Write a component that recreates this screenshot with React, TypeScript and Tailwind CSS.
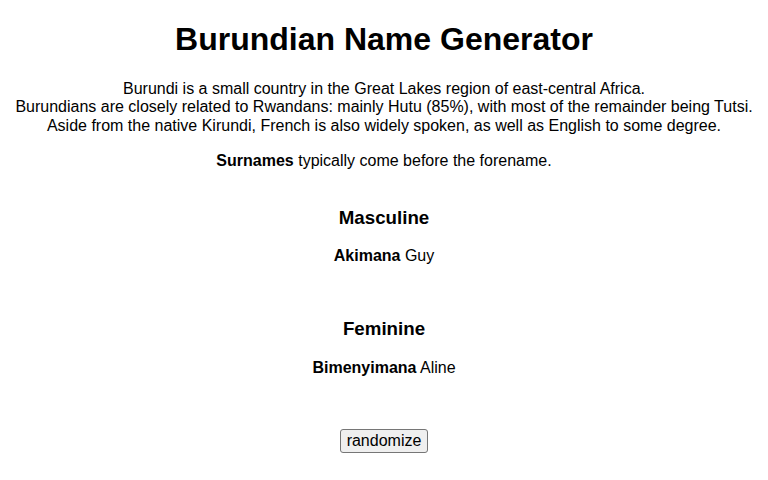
export default function App() {
  return (
    <div className="min-h-screen bg-white text-black text-center font-['Liberation_Sans',Arial,sans-serif] text-[16px] leading-[18.4px]">
      <h1 className="pt-[21px] text-[32px] font-bold leading-[37px]">Burundian Name Generator</h1>

      <p className="mt-[22px]">
        Burundi is a small country in the Great Lakes region of east-central Africa.
        <br />
        Burundians are closely related to Rwandans: mainly Hutu (85%), with most of the remainder being Tutsi.
        <br />
        Aside from the native Kirundi, French is also widely spoken, as well as English to some degree.
      </p>

      <p className="mt-[17px]">
        <b>Surnames</b> typically come before the forename.
      </p>

      <h3 className="mt-[36px] text-[18.72px] font-bold leading-[21.5px]">Masculine</h3>
      <p className="mt-[18.5px]">
        <b>Akimana</b> Guy
      </p>

      <h3 className="mt-[53px] text-[18.72px] font-bold leading-[21.5px]">Feminine</h3>
      <p className="mt-[19px]">
        <b>Bimenyimana</b> Aline
      </p>

      <div className="mt-[52px]">
        <button className="bg-[#efefef] border border-[#767676] rounded-[3px] px-[6px] py-[2px] text-[16px] leading-[18.4px] text-black hover:bg-[#e5e5e5]">
          randomize
        </button>
      </div>
    </div>
  );
}
